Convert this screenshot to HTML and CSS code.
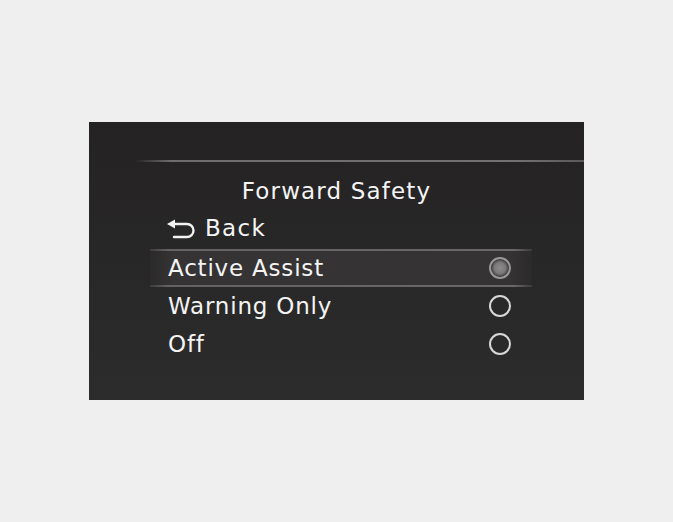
FILE: index.html
```html
<!DOCTYPE html>
<html lang="en">
<head>
    <meta charset="UTF-8">
    <meta name="viewport" content="width=device-width, initial-scale=1.0">
    <title>Forward Safety</title>
    <link rel="stylesheet" href="styles.css">
</head>
<body>
    <div class="screen">
        <div class="top-rule"></div>
        <h1 class="title">Forward Safety</h1>
        <ul class="menu">
            <li class="menu-item back">
                <svg class="back-icon" width="30" height="20" viewBox="0 0 30 20">
                    <path d="M6 5 H21 A6.5 6.5 0 0 1 21 18 H8" fill="none" stroke="#f2f2f2" stroke-width="2.4" stroke-linecap="round"/>
                    <path d="M1 5 L9 0.5 L9 9.5 Z" fill="#f2f2f2"/>
                </svg>
                <span>Back</span>
            </li>
            <li class="menu-item selected">
                <span>Active Assist</span>
                <span class="radio checked"></span>
            </li>
            <li class="menu-item">
                <span>Warning Only</span>
                <span class="radio"></span>
            </li>
            <li class="menu-item">
                <span>Off</span>
                <span class="radio"></span>
            </li>
        </ul>
    </div>
</body>
</html>
```

FILE: styles.css
```css
body {
    margin: 0;
    background: #efefef;
    font-family: 'DejaVu Sans', sans-serif;
}
.screen {
    width: 495px;
    height: 278px;
    margin: 122px 0 0 89px;
    background: linear-gradient(180deg, #242222 0%, #292828 55%, #2d2c2c 100%);
    color: #f4f4f4;
    overflow: hidden;
    display: flex;
    flex-direction: column;
}
.top-rule {
    height: 2px;
    margin: 38px 0 0 46px;
    background: linear-gradient(90deg, rgba(120,120,120,0) 0%, #6e6c6c 8%, #737171 85%, #5a5858 100%);
}
.title {
    margin: 14px 0 0;
    text-align: center;
    font-size: 23px;
    font-weight: normal;
    line-height: 30px;
    letter-spacing: 1.15px;
}
.menu {
    list-style: none;
    margin: 3px 0 0;
    padding: 0;
}
.menu-item {
    display: flex;
    align-items: center;
    justify-content: space-between;
    height: 38px;
    margin: 0 52px 0 61px;
    padding: 0 0 0 18px;
    font-size: 23px;
    letter-spacing: 0.8px;
    box-sizing: border-box;
}
.menu-item.back {
    justify-content: flex-start;
    gap: 9px;
    padding-left: 16px;
    letter-spacing: 1.3px;
}
.back-icon {
    margin-top: 2px;
}
/* highlighted row: lit edges that fade out at both ends */
.menu-item.selected {
    background: linear-gradient(90deg, rgba(53,51,51,0.2) 0%, #353333 6%, #353333 94%, rgba(53,51,51,0.2) 100%);
    border-top: 2px solid;
    border-bottom: 2px solid;
    border-image: linear-gradient(90deg, rgba(110,108,108,0.2) 0%, #646262 5%, #6a6868 95%, rgba(110,108,108,0.2) 100%) 1;
    margin-top: 2px;
}
.radio {
    width: 22px;
    height: 22px;
    margin-right: 21px;
    border: 2px solid #d8d8d8;
    border-radius: 50%;
    box-sizing: border-box;
}
.radio.checked {
    border-color: #9a9898;
    background: radial-gradient(circle, #8e8c8c 0%, #7a7878 45%, #3a3838 70%);
}
```
